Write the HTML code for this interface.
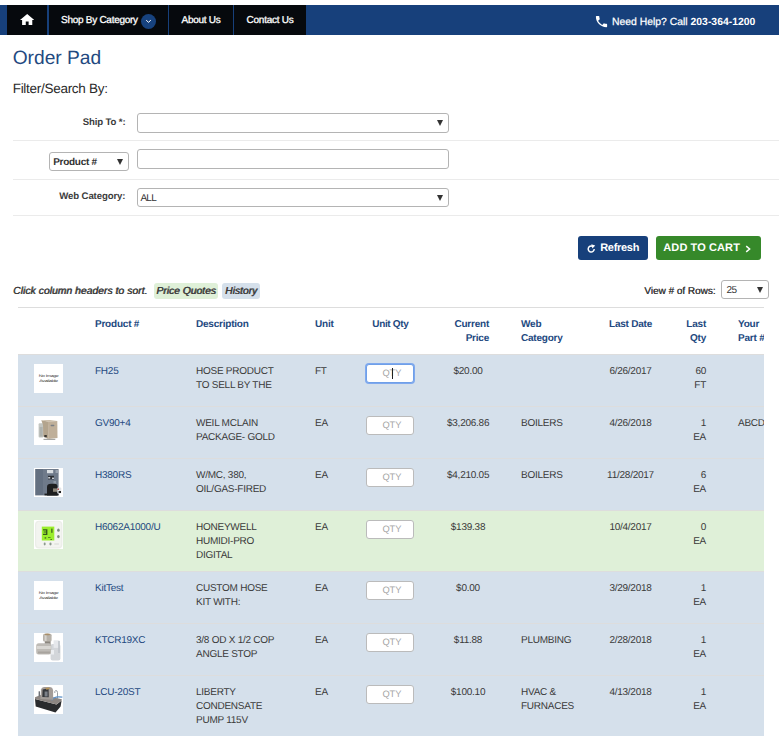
<!DOCTYPE html>
<html><head><meta charset="utf-8">
<style>
*{box-sizing:border-box;margin:0;padding:0}
html,body{width:779px;height:736px;overflow:hidden;background:#fff}
body{font-family:"Liberation Sans",Arial,sans-serif;font-size:10px;color:#333;position:relative;text-rendering:geometricPrecision}
.nav{position:absolute;left:0;top:5px;width:779px;height:30px;background:#17407b}
.nav .it{position:absolute;top:0;height:30px;background:#06090d;color:#fff;font-size:10px;line-height:31px;text-align:center;letter-spacing:-0.27px;white-space:nowrap;-webkit-text-stroke:0.3px #fff}
.help{position:absolute;left:612px;top:2px;height:30px;line-height:31px;color:#fff;font-size:10.4px;white-space:nowrap;-webkit-text-stroke:0.25px #fff}.help b{-webkit-text-stroke:0}
h1{position:absolute;left:12.7px;top:47.5px;font-size:19.2px;font-weight:normal;color:#23497f;white-space:nowrap}
.fs{position:absolute;left:12.7px;top:81.4px;font-size:13.5px;color:#2a2a2a;letter-spacing:-0.28px;white-space:nowrap}
.lbl{position:absolute;font-weight:bold;font-size:9.6px;color:#3c3c3c;text-align:right;letter-spacing:-0.12px;white-space:nowrap}
.sel{position:absolute;border:1px solid #b4b4b4;border-radius:3px;background:#fff;font-size:10px;color:#333;letter-spacing:-0.28px;white-space:nowrap}
.sel .ar{position:absolute;right:5px;top:50%;margin-top:-3px;width:0;height:0;border-left:3.5px solid transparent;border-right:3.5px solid transparent;border-top:6px solid #333}
.hr{position:absolute;left:13px;width:766px;height:1px;background:#ebebeb}
.btn{position:absolute;color:#fff;font-weight:bold;font-size:11px;border-radius:3px;white-space:nowrap}
.wrap{position:absolute;left:18px;top:307px;width:746px;height:429px;overflow:hidden;border-top:1px solid #ddd}
table{position:absolute;left:0;top:0;border-collapse:collapse;width:800px;table-layout:fixed}
th{font-size:10px;color:#23497f;font-weight:bold;text-align:left;vertical-align:top;padding:10px 0 0 0;height:46px;line-height:14px;letter-spacing:-0.22px;white-space:nowrap}
td{font-size:10px;color:#3a3a3a;vertical-align:top;padding:10px 0 0 0;line-height:14px;letter-spacing:-0.25px;white-space:nowrap}
tr.r{background:#d5e0eb;border-top:1px solid #ddd}
tr.g{background:#dff0d8}
td a{color:#23497f}
.qty{width:48px;height:19px;border:1px solid #bbb;border-radius:3px;background:#fff;color:#a4a4a4;font-size:9.3px;letter-spacing:0;text-align:left;padding-left:15.4px;line-height:16.5px;margin-top:-1px;margin-left:10px;position:relative}
.img{width:29px;height:29px;background:#fff;margin:-1px 0 0 16px;position:relative;overflow:hidden}.img svg{display:block}
.c{text-align:center}
.rt{text-align:right}
</style></head><body>
<div class="nav">
 <div class="it" style="left:7px;width:40px"><svg width="14.4" height="11.3" viewBox="0 0 15 12" preserveAspectRatio="none" style="position:absolute;left:12.8px;top:8.7px"><path d="M7.5 0 L0 6.5 H2.2 V12 H6 V8 H9 V12 H12.8 V6.5 H15 Z" fill="#fff"/></svg></div>
 <div class="it" style="left:49px;width:119px;text-align:left;padding-left:12px">Shop By Category<span style="position:absolute;left:92px;top:9px;width:15px;height:15px;border-radius:8px;background:#17427e"></span><svg width="7" height="5" viewBox="0 0 7 5" style="position:absolute;left:96px;top:14px"><path d="M1.2 1.2 L3.5 3.3 L5.8 1.2" stroke="#fff" stroke-width="1" fill="none"/></svg></div>
 <div class="it" style="left:169px;width:64px">About Us</div>
 <div class="it" style="left:234px;width:72px">Contact Us</div>
 <svg width="15" height="15" viewBox="0 0 24 24" style="position:absolute;left:593.6px;top:8.6px"><path d="M6.6 10.8c1.4 2.8 3.8 5.1 6.6 6.600l2.200-2.200c.3-.3.700-.4 1-.2 1.100.4 2.300.6 3.600.6.600 0 1 .4 1 1V20c0 .6-.4 1-1 1C10.600 21 3 13.400 3 4c0-.6.400-1 1-1h3.500c.600 0 1 .4 1 1 0 1.300.2 2.500.6 3.600.1.300 0 .7-.2 1z" fill="#fff"/></svg>
 <div class="help">Need Help? Call <b>203-364-1200</b></div>
</div>
<h1>Order Pad</h1>
<div class="fs">Filter/Search By:</div>

<div class="lbl" style="left:0;width:125.5px;top:116.6px">Ship To *:</div>
<div class="sel" style="left:137px;top:113px;width:312px;height:20px"><span class="ar"></span></div>
<div class="hr" style="top:140px"></div>
<div class="sel" style="left:49px;top:152px;width:80px;height:19px;font-weight:bold;line-height:19.5px;padding-left:3.2px">Product #<span class="ar"></span></div>
<div class="sel" style="left:137px;top:149px;width:312px;height:20px"></div>
<div class="hr" style="top:179px"></div>
<div class="lbl" style="left:0;width:125.3px;top:190.6px">Web Category:</div>
<div class="sel" style="left:137px;top:188px;width:312px;height:19px;line-height:19px;padding-left:2.4px;letter-spacing:-0.7px">ALL<span class="ar"></span></div>
<div class="hr" style="top:215px"></div>

<div class="btn" style="left:578px;top:236px;width:70px;height:24px;line-height:25px;background:#17407b;padding-left:22.2px;letter-spacing:-0.3px">Refresh<svg width="9" height="9" viewBox="0 0 9 9" style="position:absolute;left:9px;top:8px"><path d="M7.2 5 A3 3 0 1 1 5.4 2.2" stroke="#fff" stroke-width="1.5" fill="none"/><path d="M4.3 0.3 L8.2 1.6 L5.4 4.4 Z" fill="#fff"/></svg></div>
<div class="btn" style="left:656px;top:236px;width:105px;height:24px;line-height:25px;background:#36892a;padding-left:7.3px;letter-spacing:0.1px">ADD TO CART<svg width="6" height="8" viewBox="0 0 6 8" style="position:absolute;left:89px;top:8.6px"><path d="M1.2 1.2 L4.6 4 L1.2 6.8" stroke="#fff" stroke-width="1.5" fill="none"/></svg></div>

<div style="position:absolute;left:13px;top:286px;font-size:10.3px;font-style:italic;font-weight:normal;color:#3a3a3a;text-shadow:0.6px 0 0 #3a3a3a;letter-spacing:0.05px;white-space:nowrap">Click column headers to sort.</div>
<div style="position:absolute;left:154px;top:283px;width:64px;height:16px;line-height:18px;background:#dff0d8;border-radius:3px;font-size:10.3px;font-style:italic;font-weight:normal;color:#3a3a3a;text-shadow:0.6px 0 0 #3a3a3a;text-align:center;white-space:nowrap">Price Quotes</div>
<div style="position:absolute;left:222px;top:283px;width:38px;height:16px;line-height:18px;background:#d5e0eb;border-radius:3px;font-size:10.3px;font-style:italic;font-weight:normal;color:#3a3a3a;text-shadow:0.6px 0 0 #3a3a3a;text-align:center;white-space:nowrap">History</div>
<div class="lbl" style="left:560px;width:155.4px;top:285.8px;font-weight:normal;font-size:10px;letter-spacing:-0.03px;text-shadow:0.3px 0 0 #3c3c3c">View # of Rows:</div>
<div class="sel" style="left:721px;top:280px;width:48px;height:19px;line-height:20px;padding-left:4.5px;letter-spacing:-0.6px">25<span class="ar"></span></div>

<div class="wrap">
<table>
<colgroup><col style="width:77px"><col style="width:101px"><col style="width:119px"><col style="width:41px"><col style="width:91px"><col style="width:42px"><col style="width:32px"><col style="width:86px"><col style="width:47px"><col style="width:52px"><col style="width:32px"><col style="width:80px"></colgroup>
<tr><th></th><th>Product #</th><th>Description</th><th>Unit</th><th style="padding-left:16.3px;letter-spacing:-0.35px">Unit Qty</th><th class="rt">Current<br>Price</th><th></th><th>Web<br>Category</th><th style="padding-left:2px">Last Date</th><th class="rt">Last<br>Qty</th><th></th><th>Your<br>Part #</th></tr>
<tr class="r" style="height:52px"><td><div class="img"><svg width="29" height="29" viewBox="0 0 29 29"><rect width="29" height="29" fill="#fff"/><text x="4.7" y="13.1" font-family="Liberation Sans,sans-serif" font-size="3.6" fill="#3c3c3c" textLength="19.6" lengthAdjust="spacingAndGlyphs">No Image</text><text x="5.2" y="18" font-family="Liberation Sans,sans-serif" font-size="3.6" fill="#3c3c3c" textLength="18.6" lengthAdjust="spacingAndGlyphs">Available</text></svg></div></td><td><a>FH25</a></td><td>HOSE PRODUCT<br>TO SELL BY THE</td><td>FT</td><td><div class="qty" style="border:1px solid #6f9fe8;box-shadow:0 0 0 1px #7fa9ee">QTY<span style="position:absolute;left:25px;top:3px;width:1px;height:11px;background:#222"></span></div></td><td class="c">$20.00</td><td></td><td></td><td class="c">6/26/2017</td><td class="rt">60<br>FT</td><td></td><td></td></tr>
<tr class="r" style="height:52px"><td><div class="img"><svg width="29" height="29" viewBox="0 0 29 29"><rect width="29" height="29" fill="#fff"/><rect x="4.6" y="7.3" width="4.8" height="14.2" rx="1" fill="#c3c6c2"/><rect x="5.6" y="11" width="3" height="9.5" fill="#aeb2ae"/><polygon points="7.3,4.3 14,5.6 14.2,23 9.2,20.6 9,9" fill="#b3a48d"/><polygon points="14,5.6 23.3,5 23.5,22 14.2,23" fill="#bfaf99"/><polygon points="7.3,4.3 16,4 23.3,5 14,5.8" fill="#cbbda8"/><rect x="16.6" y="8.8" width="3.8" height="1.5" rx="0.7" fill="#7a7e84"/><rect x="10.3" y="19" width="2.5" height="2.2" fill="#3a3834"/><rect x="9.5" y="22.8" width="11.8" height="1.2" fill="#a5a5a2"/></svg></div></td><td><a>GV90+4</a></td><td>WEIL MCLAIN<br>PACKAGE- GOLD</td><td>EA</td><td><div class="qty">QTY</div></td><td class="c">$3,206.86</td><td></td><td>BOILERS</td><td class="c">4/26/2018</td><td class="rt">1<br>EA</td><td></td><td>ABCD</td></tr>
<tr class="r" style="height:52px"><td><div class="img"><svg width="29" height="29" viewBox="0 0 29 29"><rect width="29" height="29" fill="#fff"/><rect x="1.2" y="1" width="8" height="26.4" fill="#647081"/><rect x="9" y="1" width="15.6" height="26.4" fill="#6f7a8a"/><rect x="13" y="2" width="6.2" height="3.2" fill="#d9dde1"/><rect x="21.5" y="2" width="2.5" height="3" fill="#9aa3b0"/><rect x="14" y="7.8" width="6" height="3.6" fill="#2c2f35"/><rect x="14.2" y="9" width="2" height="1.6" fill="#c8ccd2"/><rect x="18" y="9.6" width="2" height="1.4" fill="#c8ccd2"/><rect x="19.5" y="13" width="2.5" height="3" fill="#8f99a6"/><path d="M13 27.4 V19 Q13 15.7 17 15.7 H21 Q23.5 16 23.5 19 V27.4 Z" fill="#1d1e20"/><rect x="10.5" y="25.6" width="14" height="1.8" fill="#1d1e20"/><rect x="19" y="20.4" width="4" height="3.4" fill="#8b8578"/><rect x="23.3" y="19.6" width="4" height="5.8" rx="1" fill="#e3e4e6"/><rect x="24.6" y="23" width="2.4" height="2" fill="#222"/><rect x="23.4" y="20.4" width="1.6" height="1.6" fill="#b05555"/></svg></div></td><td><a>H380RS</a></td><td>W/MC, 380,<br>OIL/GAS-FIRED</td><td>EA</td><td><div class="qty">QTY</div></td><td class="c">$4,210.05</td><td></td><td>BOILERS</td><td class="c">11/28/2017</td><td class="rt">6<br>EA</td><td></td><td></td></tr>
<tr class="r g" style="height:61px"><td><div class="img"><svg width="29" height="29" viewBox="0 0 29 29"><rect width="29" height="29" fill="#fff"/><rect x="1" y="0.7" width="27.4" height="27.7" rx="4" fill="#eceee9"/><rect x="2.2" y="1.8" width="25" height="25.5" rx="3.5" fill="#f3f4f0"/><rect x="7.8" y="6.6" width="12.5" height="13.9" fill="#9bee2c"/><path d="M9 9.3 h4.4 v5.6 h-4.4 v-1.2 h3 v-1.1 h-2.4 v-1 h2.4 v-1.1 h-3 z" fill="#36591a"/><rect x="17.1" y="8.6" width="1.5" height="4.2" fill="#4d7a1c"/><rect x="10.6" y="17" width="1.6" height="1.8" fill="#5a8a22"/><rect x="14" y="17" width="2.6" height="1" fill="#5a8a22"/><rect x="16.4" y="19" width="1.6" height="0.8" fill="#3d6314"/><ellipse cx="24.4" cy="10.2" rx="1.3" ry="1.6" fill="#7d8a80"/><ellipse cx="24.4" cy="16.6" rx="1.3" ry="1.6" fill="#7d8a80"/><ellipse cx="10.7" cy="24" rx="1" ry="1.4" fill="#8c9a8e"/><ellipse cx="16.5" cy="24" rx="1.1" ry="1.4" fill="#8c9a8e"/><rect x="20.3" y="23.5" width="4.6" height="1" fill="#d5d8d2"/></svg></div></td><td><a>H6062A1000/U</a></td><td>HONEYWELL<br>HUMIDI-PRO<br>DIGITAL</td><td>EA</td><td><div class="qty">QTY</div></td><td class="c">$139.38</td><td></td><td></td><td class="c">10/4/2017</td><td class="rt">0<br>EA</td><td></td><td></td></tr>
<tr class="r" style="height:52px"><td><div class="img"><svg width="29" height="29" viewBox="0 0 29 29"><rect width="29" height="29" fill="#fff"/><text x="4.7" y="13.1" font-family="Liberation Sans,sans-serif" font-size="3.6" fill="#3c3c3c" textLength="19.6" lengthAdjust="spacingAndGlyphs">No Image</text><text x="5.2" y="18" font-family="Liberation Sans,sans-serif" font-size="3.6" fill="#3c3c3c" textLength="18.6" lengthAdjust="spacingAndGlyphs">Available</text></svg></div></td><td><a>KitTest</a></td><td>CUSTOM HOSE<br>KIT WITH:</td><td>EA</td><td><div class="qty">QTY</div></td><td class="c">$0.00</td><td></td><td></td><td class="c">3/29/2018</td><td class="rt">1<br>EA</td><td></td><td></td></tr>
<tr class="r" style="height:52px"><td><div class="img"><svg width="29" height="29" viewBox="0 0 29 29"><rect width="29" height="29" fill="#fff"/><rect x="16.6" y="11" width="9.8" height="16.4" rx="2" fill="#d3d6da"/><rect x="19.6" y="7.3" width="5.8" height="7.6" fill="#e6e8ec"/><rect x="24.2" y="8" width="1.6" height="12" fill="#bfc4ca"/><rect x="10.8" y="8" width="5.8" height="5" fill="#8b867e"/><rect x="2.2" y="10.3" width="15" height="11.2" rx="2.5" fill="#bebbb6"/><rect x="2.8" y="13" width="14" height="3" fill="#d9d7d3"/><rect x="4" y="18.5" width="12" height="2" fill="#a8a49e"/><rect x="9" y="0.7" width="8.6" height="7.8" rx="1.5" fill="#b7b2aa"/><rect x="10.6" y="1.5" width="2" height="6.4" fill="#d6d3cd"/><ellipse cx="13.3" cy="1.4" rx="2.8" ry="0.9" fill="#a98f6a"/><rect x="17" y="17" width="3" height="4.5" fill="#eceef1"/></svg></div></td><td><a>KTCR19XC</a></td><td>3/8 OD X 1/2 COP<br>ANGLE STOP</td><td>EA</td><td><div class="qty">QTY</div></td><td class="c">$11.88</td><td></td><td>PLUMBING</td><td class="c">2/28/2018</td><td class="rt">1<br>EA</td><td></td><td></td></tr>
<tr class="r" style="height:66px"><td><div class="img"><svg width="29" height="29" viewBox="0 0 29 29"><rect width="29" height="29" fill="#fff"/><polygon points="1,14 1.7,21.5 21.5,27.6 26.6,21.5 27.6,15.5 22.5,19.5" fill="#2a2b2d"/><polygon points="1,12.2 7.3,9.8 27.9,14.2 27.6,15.5 22.5,19.5 1,14" fill="#8c8581"/><path d="M23.5 14.5 V7.5 Q23.5 5.2 21.5 5.6 Q20.6 6 20.8 8" stroke="#8c9199" stroke-width="0.9" fill="none"/><path d="M17.6 15.2 Q20 10.8 28.4 12.2" stroke="#5b90c9" stroke-width="1.2" fill="none"/><path d="M6.4 14 L7 4.5 Q7.5 2 10 2 H16 Q18.6 2.2 19.1 5 V14.7 Z" fill="#a39c98"/><polygon points="8.6,4.6 14.6,3.2 14.7,12.2 8.3,12" fill="#35363a"/><rect x="10.6" y="6.5" width="3" height="5" fill="#7b7f87"/><polygon points="11.5,3 15,2.4 15.8,4 12.4,4.8" fill="#b79558"/><rect x="4.6" y="6.3" width="1.4" height="5" fill="#6d7076"/></svg></div></td><td><a>LCU-20ST</a></td><td>LIBERTY<br>CONDENSATE<br>PUMP 115V</td><td>EA</td><td><div class="qty">QTY</div></td><td class="c">$100.10</td><td></td><td>HVAC &amp;<br>FURNACES</td><td class="c">4/13/2018</td><td class="rt">1<br>EA</td><td></td><td></td></tr>
</table>
</div>
</body></html>
